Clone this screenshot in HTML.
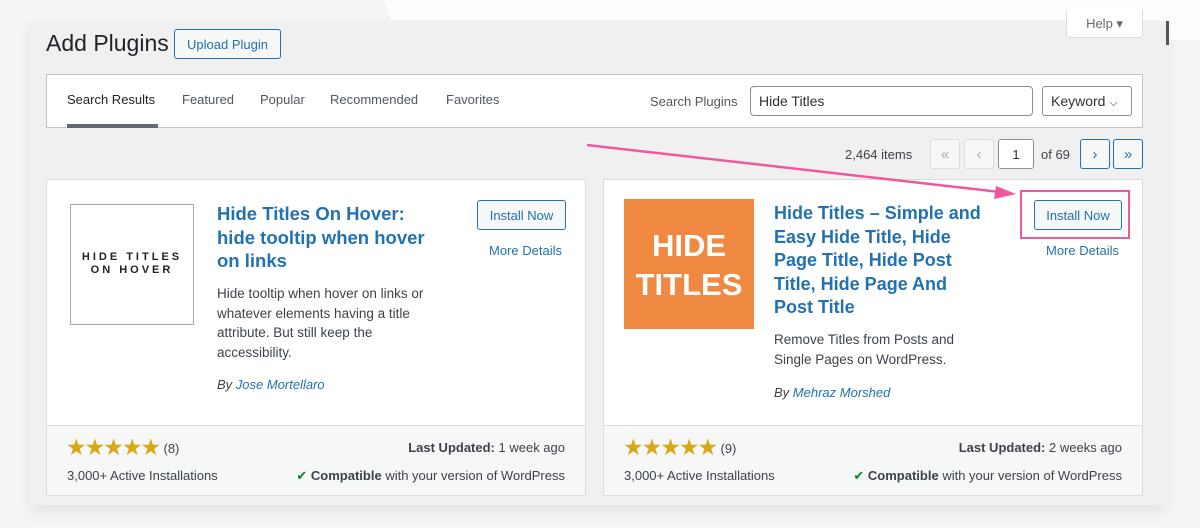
<!DOCTYPE html>
<html><head><meta charset="utf-8"><style>
*{box-sizing:border-box;margin:0;padding:0}
body{width:1200px;height:528px;overflow:hidden;background:#f5f5f5;font-family:"Liberation Sans",sans-serif;position:relative;color:#3c434a}
.blob{position:absolute;left:380px;top:-60px;width:900px;height:100px;background:#fdfdfd;transform:skewX(20deg)}
.panel{position:absolute;left:30px;top:21px;width:1137px;height:484px;background:#f0f0f1;box-shadow:0 6px 14px rgba(0,0,0,.08)}
.sb{position:absolute;left:1166px;top:21px;width:3px;height:24px;background:#555}
.abs{position:absolute}
h1{position:absolute;left:46px;top:30px;font-size:23px;font-weight:400;color:#1d2327}
.btn{position:absolute;border:1px solid #2271b1;color:#2271b1;border-radius:3px;background:#f6f7f7;font-size:13px;display:flex;align-items:center;justify-content:center}
.help{position:absolute;left:1066px;top:10px;width:77px;height:28px;background:#fff;border:1px solid #dcdcde;border-top:none;border-radius:0 0 4px 4px;font-size:13px;color:#646970;text-align:center;padding-top:6px}
.nav{position:absolute;left:46px;top:74px;width:1097px;height:54px;background:#fff;border:1px solid #c3c4c7}
.tab{position:absolute;top:92px;font-size:13px;color:#50575e}
.card{position:absolute;top:179px;width:540px;height:317px;background:#fff;border:1px solid #dcdcde}
.foot{position:absolute;left:0;right:0;bottom:0;height:70px;background:#f6f7f7;border-top:1px solid #dcdcde}
.title{position:absolute;font-size:18px;font-weight:700;color:#2271b1;line-height:23.5px}
.desc{position:absolute;font-size:13.5px;line-height:19.7px;color:#3c434a}
.by{position:absolute;font-size:13px;font-style:italic}
.by span{color:#2271b1}
.md{position:absolute;font-size:13px;color:#2271b1}
.stars{position:absolute;left:19px;color:#dba617;font-size:23px;letter-spacing:-2px;line-height:24px}
.f{position:absolute;font-size:13px;color:#3c434a}
.pg{position:absolute;top:139px;width:30px;height:30px;border-radius:3px;display:flex;align-items:center;justify-content:center;font-size:15px}
</style></head><body>
<div class="blob"></div>
<div class="panel"></div>
<div class="sb"></div>
<h1>Add Plugins</h1>
<div class="btn" style="left:174px;top:29px;width:107px;height:30px">Upload Plugin</div>
<div class="help">Help ▾</div>
<div class="nav"></div>
<div class="tab" style="left:67px;color:#1d2327">Search Results</div>
<div class="abs" style="left:67px;top:124px;width:91px;height:4px;background:#646970"></div>
<div class="tab" style="left:182px">Featured</div>
<div class="tab" style="left:260px">Popular</div>
<div class="tab" style="left:330px">Recommended</div>
<div class="tab" style="left:446px">Favorites</div>
<div class="tab" style="left:650px;top:94px">Search Plugins</div>
<div class="abs" style="left:750px;top:86px;width:283px;height:30px;border:1px solid #8c8f94;border-radius:4px;background:#fff;font-size:14px;color:#2c3338;padding:6px 8px">Hide Titles</div>
<div class="abs" style="left:1042px;top:86px;width:90px;height:30px;border:1px solid #8c8f94;border-radius:3px;background:#fff;font-size:14px;color:#2c3338;padding:6px 8px">Keyword <span style="font-size:11px">⌵</span></div>
<div class="f" style="left:845px;top:147px">2,464 items</div>
<div class="pg" style="left:930px;border:1px solid #dcdcde;background:#f6f7f7;color:#a7aaad">«</div>
<div class="pg" style="left:964px;border:1px solid #dcdcde;background:#f6f7f7;color:#a7aaad">‹</div>
<div class="pg" style="left:998px;width:36px;border:1px solid #8c8f94;background:#fff;color:#2c3338;font-size:13px">1</div>
<div class="f" style="left:1041px;top:147px">of 69</div>
<div class="pg" style="left:1080px;border:1px solid #2271b1;background:#f6f7f7;color:#2271b1">›</div>
<div class="pg" style="left:1113px;border:1px solid #2271b1;background:#f6f7f7;color:#2271b1">»</div>

<div class="card" style="left:46px">
 <div class="abs" style="left:23px;top:24px;width:124px;height:121px;border:1px solid #a7aaad;font-size:11px;font-weight:700;letter-spacing:3px;text-align:center;color:#222;padding-top:46px;line-height:13px">HIDE TITLES<br>ON HOVER</div>
 <div class="title" style="left:170px;top:22px;font-size:18.5px">Hide Titles On Hover:<br>hide tooltip when hover<br>on links</div>
 <div class="btn" style="left:430px;top:20px;width:89px;height:30px">Install Now</div>
 <div class="md" style="left:442px;top:63px">More Details</div>
 <div class="desc" style="left:170px;top:104px">Hide tooltip when hover on links or<br>whatever elements having a title<br>attribute. But still keep the<br>accessibility.</div>
 <div class="by" style="left:170px;top:197px">By <span>Jose Mortellaro</span></div>
 <div class="foot">
  <div class="stars" style="top:9px">★★★★★ <span style="font-size:13px;color:#3c434a;letter-spacing:0;vertical-align:2px">(8)</span></div>
  <div class="f" style="left:20px;top:42px">3,000+ Active Installations</div>
  <div class="f" style="right:20px;top:14px"><b>Last Updated:</b> 1 week ago</div>
  <div class="f" style="right:20px;top:42px"><span style="color:#008a20">✔</span> <b>Compatible</b> with your version of WordPress</div>
 </div>
</div>

<div class="card" style="left:603px">
 <div class="abs" style="left:20px;top:19px;width:130px;height:130px;background:#ef8841;color:#fff;font-size:31px;font-weight:700;text-align:center;line-height:39px;padding-top:27px">HIDE<br>TITLES</div>
 <div class="title" style="left:170px;top:22px">Hide Titles – Simple and<br>Easy Hide Title, Hide<br>Page Title, Hide Post<br>Title, Hide Page And<br>Post Title</div>
 <div class="btn" style="left:430px;top:20px;width:88px;height:30px">Install Now</div>
 <div class="md" style="left:442px;top:63px">More Details</div>
 <div class="desc" style="left:170px;top:150px">Remove Titles from Posts and<br>Single Pages on WordPress.</div>
 <div class="by" style="left:170px;top:205px">By <span>Mehraz Morshed</span></div>
 <div class="foot">
  <div class="stars" style="top:9px">★★★★★ <span style="font-size:13px;color:#3c434a;letter-spacing:0;vertical-align:2px">(9)</span></div>
  <div class="f" style="left:20px;top:42px">3,000+ Active Installations</div>
  <div class="f" style="right:20px;top:14px"><b>Last Updated:</b> 2 weeks ago</div>
  <div class="f" style="right:20px;top:42px"><span style="color:#008a20">✔</span> <b>Compatible</b> with your version of WordPress</div>
 </div>
</div>

<div class="abs" style="left:1020px;top:190px;width:110px;height:49px;border:2px solid #f0579c"></div>
<svg class="abs" style="left:0;top:0" width="1200" height="528"><line x1="587" y1="145" x2="1000" y2="192" stroke="#f0579c" stroke-width="2.5"/><polygon points="1016,194 996,186 994,199" fill="#f0579c"/></svg>
</body></html>
